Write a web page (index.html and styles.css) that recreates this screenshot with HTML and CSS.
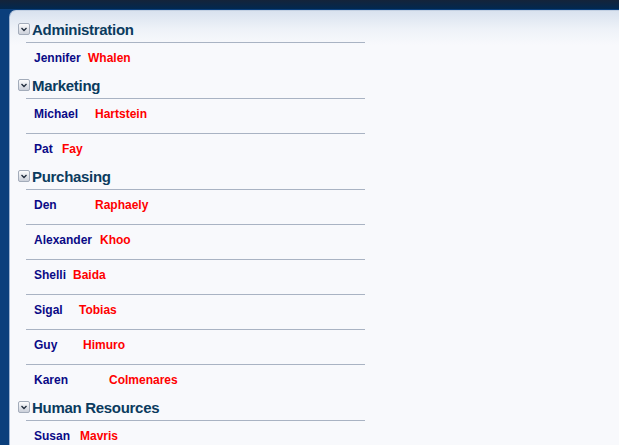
FILE: index.html
```html
<!DOCTYPE html>
<html lang="en">
<head>
    <meta charset="UTF-8">
    <title>Employees by Department</title>
    <link rel="stylesheet" href="styles.css">
</head>
<body>

<div class="topbar"></div>

<div class="panel">
    <div class="groups">

        <div class="group">
            <div class="group-head">
                <svg class="toggle" width="12" height="12" viewBox="0 0 12 12">
                    <defs>
                        <linearGradient id="tg" x1="0" y1="0" x2="0" y2="1">
                            <stop offset="0" stop-color="#ffffff"/>
                            <stop offset="1" stop-color="#c9ced8"/>
                        </linearGradient>
                    </defs>
                    <rect x="0.5" y="0.5" width="11" height="11" rx="1.5" fill="url(#tg)" stroke="#a3acba"/>
                    <path d="M3.5 5 L6 7.5 L8.5 5" fill="none" stroke="#1e2a3a" stroke-width="1.3"/>
                </svg>Administration
            </div>
            <div class="row"><span class="first" style="width:54px">Jennifer</span><span class="last">Whalen</span></div>
        </div>

        <div class="group">
            <div class="group-head">
                <svg class="toggle" width="12" height="12" viewBox="0 0 12 12">
                    <rect x="0.5" y="0.5" width="11" height="11" rx="1.5" fill="url(#tg)" stroke="#a3acba"/>
                    <path d="M3.5 5 L6 7.5 L8.5 5" fill="none" stroke="#1e2a3a" stroke-width="1.3"/>
                </svg>Marketing
            </div>
            <div class="row"><span class="first" style="width:61px">Michael</span><span class="last">Hartstein</span></div>
            <div class="row"><span class="first" style="width:28px">Pat</span><span class="last">Fay</span></div>
        </div>

        <div class="group">
            <div class="group-head">
                <svg class="toggle" width="12" height="12" viewBox="0 0 12 12">
                    <rect x="0.5" y="0.5" width="11" height="11" rx="1.5" fill="url(#tg)" stroke="#a3acba"/>
                    <path d="M3.5 5 L6 7.5 L8.5 5" fill="none" stroke="#1e2a3a" stroke-width="1.3"/>
                </svg>Purchasing
            </div>
            <div class="row"><span class="first" style="width:61px">Den</span><span class="last">Raphaely</span></div>
            <div class="row"><span class="first" style="width:66px">Alexander</span><span class="last">Khoo</span></div>
            <div class="row"><span class="first" style="width:39px">Shelli</span><span class="last">Baida</span></div>
            <div class="row"><span class="first" style="width:45px">Sigal</span><span class="last">Tobias</span></div>
            <div class="row"><span class="first" style="width:49px">Guy</span><span class="last">Himuro</span></div>
            <div class="row"><span class="first" style="width:75px">Karen</span><span class="last">Colmenares</span></div>
        </div>

        <div class="group">
            <div class="group-head">
                <svg class="toggle" width="12" height="12" viewBox="0 0 12 12">
                    <rect x="0.5" y="0.5" width="11" height="11" rx="1.5" fill="url(#tg)" stroke="#a3acba"/>
                    <path d="M3.5 5 L6 7.5 L8.5 5" fill="none" stroke="#1e2a3a" stroke-width="1.3"/>
                </svg>Human Resources
            </div>
            <div class="row"><span class="first" style="width:46px">Susan</span><span class="last">Mavris</span></div>
        </div>

    </div>
</div>

</body>
</html>
```

FILE: styles.css
```css
html, body {
    height: 100%;
}
body {
    margin: 0;
    background: #0b3f7c;
    font-family: 'Liberation Sans', Arial, sans-serif;
    overflow: hidden;
}
.topbar {
    height: 9px;
    background: linear-gradient(#14233a, #02284f);
}
.panel {
    margin: 1px 0 0 9px;
    height: calc(100% - 10px);
    border-top: 1px solid #c3d0e2;
    border-left: 1px solid #9fb4d2;
    border-radius: 7px 0 0 0;
    background: linear-gradient(#d9e2ef 0, #eef2f8 18px, #f8f9fc 34px, #f8f9fc 100%);
}
.groups {
    width: 339px;
    margin-left: 16px;
    padding-top: 9px;
}
.group-head {
    font-size: 15px;
    font-weight: bold;
    line-height: 20px;
    letter-spacing: -0.3px;
    color: #0b3b5e;
    padding-bottom: 2px;
    border-bottom: 1px solid #a9b3c3;
    white-space: nowrap;
}
.toggle {
    margin-left: -8px;
    margin-right: 2px;
    vertical-align: baseline;
}
.row {
    font-size: 12px;
    font-weight: bold;
    line-height: 14px;
    padding: 8px 0 12px 8px;
    border-bottom: 1px solid #a9b3c3;
    white-space: nowrap;
}
.row:last-child {
    border-bottom: none;
    padding-bottom: 11px;
}
.first {
    display: inline-block;
    color: #0a0a86;
}
.last {
    color: #ff0000;
}
```
